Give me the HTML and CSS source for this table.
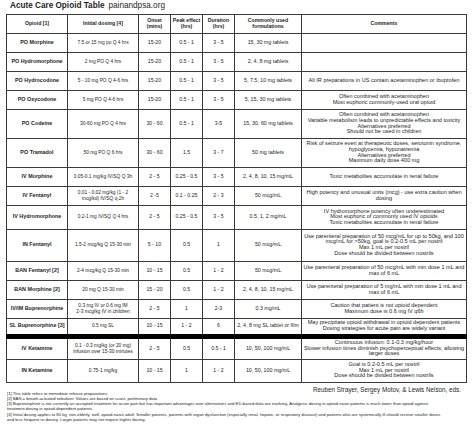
FILE: index.html
```html
<!DOCTYPE html>
<html>
<head>
<meta charset="utf-8">
<link rel="stylesheet" href="styles.css">
</head>
<body>
<div class="page">
  <div class="title"><span class="t-main">Acute Care Opioid Table</span><span class="t-site">painandpsa.org</span></div>
  <table class="opioids">
    <colgroup>
      <col class="c1"><col class="c2"><col class="c3"><col class="c4"><col class="c5"><col class="c6"><col class="c7">
    </colgroup>
    <tr class="h19 head">
      <td>Opioid [1]</td><td>Initial dosing [4]</td><td>Onset<br>(mins)</td><td>Peak effect<br>(hrs)</td><td>Duration<br>(hrs)</td><td>Commonly used<br>formulations</td><td>Comments</td>
    </tr>
    <tr class="h19">
      <td>PO Morphine</td><td>7.5 or 15 mg po Q 4 hrs</td><td>15-20</td><td>0.5 - 1</td><td>3 - 5</td><td>15, 30 mg tablets</td><td></td>
    </tr>
    <tr class="h19">
      <td>PO Hydromorphone</td><td>2 mg PO Q 4 hrs</td><td>15-20</td><td>0.5 - 1</td><td>3 - 5</td><td>2, 4, 8 mg tablets</td><td></td>
    </tr>
    <tr class="h19">
      <td>PO Hydrocodone</td><td>5 - 10 mg PO Q 4-6 hrs</td><td>15-20</td><td>0.5 - 1</td><td>3 - 5</td><td>5, 7.5, 10 mg tablets</td><td>All IR preparations in US contain acetaminophen or ibuprofen</td>
    </tr>
    <tr class="h19">
      <td>PO Oxycodone</td><td>5 mg PO Q 4-6 hrs</td><td>15-20</td><td>0.5 - 1</td><td>3 - 5</td><td>5, 15, 30 mg tablets</td><td>Often combined with acetaminophen<br>Most euphoric commonly-used oral opioid</td>
    </tr>
    <tr class="h29">
      <td>PO Codeine</td><td>30-60 mg PO Q 4 hrs</td><td>30 - 60</td><td>0.5 - 1</td><td>3-5</td><td>15, 30, 60 mg tablets</td><td>Often combined with acetaminophen<br>Variable metabolism leads to unpredictable effects and toxicity<br>Alternatives preferred<br>Should not be used in children</td>
    </tr>
    <tr class="h29">
      <td>PO Tramadol</td><td>50 mg PO Q 6 hrs</td><td>30 - 60</td><td>1.5</td><td>3 - 7</td><td>50 mg tablets</td><td>Risk of seizure even at therapeutic doses, serotonin syndrome,<br>hypoglycemia, hyponatremia<br>Alternatives preferred<br>Maximum daily dose 400 mg</td>
    </tr>
    <tr class="h19">
      <td>IV Morphine</td><td>0.05-0.1 mg/kg IV/SQ Q 3h</td><td>2 - 5</td><td>0.25 - 0.5</td><td>3 - 5</td><td>2, 4, 8, 10, 15 mg/mL</td><td>Toxic metabolites accumulate in renal failure</td>
    </tr>
    <tr class="h19">
      <td>IV Fentanyl</td><td>0.01 - 0.02 mg/kg (1 - 2<br>mcg/kd) IV/SQ q 2h</td><td>2 -5</td><td>0.1 - 0.25</td><td>2 - 3</td><td>50 mcg/mL</td><td>High potency and unusual units (mcg) - use extra caution when<br>dosing</td>
    </tr>
    <tr class="h24">
      <td>IV Hydromorphone</td><td>0.2-1 mg IV/SQ Q 4 hrs</td><td>2 - 5</td><td>0.25 - 0.5</td><td>3 - 5</td><td>0.5, 1, 2 mg/mL</td><td>IV hydromorphone potency often underestimated<br>Most euphoric of commonly used IV opioids<br>Toxic metabolites accumulate in renal failure</td>
    </tr>
    <tr class="h32">
      <td>IN Fentanyl</td><td>1.5-2 mcg/kg Q 15-30 min</td><td>5 - 10</td><td>0.5</td><td>1</td><td>50 mcg/mL</td><td>Use parenteral preparation of 50 mcg/mL for up to 50kg, and 100<br>mcg/mL for &gt;50kg, goal is 0.2-0.5 mL per nostril<br>Max 1 mL per nostril<br>Dose should be divided between nostrils</td>
    </tr>
    <tr class="h19">
      <td>BAN Fentanyl [2]</td><td>2-4 mcg/kg Q 15-30 min</td><td>10 - 15</td><td>0.5</td><td>1 - 2</td><td>50 mcg/mL</td><td>Use parenteral preparation of 50 mcg/mL with min dose 1 mL and<br>max of 6 mL</td>
    </tr>
    <tr class="h19">
      <td>BAN Morphine [2]</td><td>20 mg Q 15-30 min</td><td>15 - 20</td><td>0.5</td><td>1 - 2</td><td>2, 4, 8, 10, 15 mg/mL</td><td>Use parenteral preparation of 5 mg/mL with min dose 1 mL and<br>max of 6 mL</td>
    </tr>
    <tr class="h19">
      <td>IV/IM Buprenorphine</td><td>0.3 mg IV or 0.6 mg IM<br>2-3 mcg/kg IV in children</td><td>2 - 5</td><td>1</td><td>2-3</td><td>0.3 mg/mL</td><td>Caution that patient is not opioid dependent<br>Maximum dose is 0.6 mg IV q6h</td>
    </tr>
    <tr class="h18">
      <td>SL Buprenorphine [3]</td><td>0.5 mg SL</td><td>10 - 15</td><td>1 - 2</td><td>6</td><td>2, 4, 8 mg SL tablet or film</td><td>May precipitate opioid withdrawal in opioid dependent patients<br>Dosing strategies for acute pain are widely variant</td>
    </tr>
    <tr class="h23 sep">
      <td>IV Ketamine</td><td>0.1 - 0.3 mg/kg (or 20 mg)<br>infusion over 15-30 minutes</td><td>2 - 5</td><td>0.5</td><td>0.5 - 1</td><td>10, 50, 100 mg/mL</td><td>Continuous infusion: 0.1-0.3 mg/kg/hour<br>Slower infusion times diminish psychoperceptual effects, allowing<br>larger doses</td>
    </tr>
    <tr class="h23">
      <td>IN Ketamine</td><td>0.75-1 mg/kg</td><td>10 - 15</td><td>1</td><td>1 - 2</td><td>10, 50, 100 mg/mL</td><td>Goal is 0.2-0.5 mL per nostril<br>Max 1 mL per nostril<br>Dose should be divided between nostrils</td>
    </tr>
  </table>
  <div class="authors">Reuben Strayer, Sergey Motov, &amp; Lewis Nelson, eds.</div>
  <div class="notes">
    <div>[1] This table refers to immediate release preparations</div>
    <div>[2] BAN = breath-actuated nebulizer. Values are based on scant, preliminary data</div>
    <div>[3] Buprenorphine is not currently an accepted treatment for acute pain but has important advantages over alternatives and ED-based data are evolving. Analgesic dosing in opioid-naive patients is much lower than opioid agonist<br>treatment dosing in opioid-dependent patients.</div>
    <div>[4] Initial dosing applies to 80 kg, non-elderly, well, opioid-naive adult. Smaller patients, patients with organ dysfunction (especially renal, hepatic, or respiratory disease) and patients who are systemically ill should receive smaller doses<br>and less frequent re-dosing. Larger patients may not require higher dosing.</div>
  </div>
</div>
</body>
</html>
```

FILE: styles.css
```css
html, body {
  margin: 0;
  padding: 0;
  background: #fff;
}
body {
  font-family: "Liberation Sans", Arial, sans-serif;
  color: #1e1e1e;
}
.page {
  width: 474px;
  height: 430px;
  overflow: hidden;
}
.title {
  height: 13.5px;
  padding: 0.5px 0 0 10px;
  box-sizing: border-box;
  font-size: 8.2px;
  line-height: 10px;
  white-space: nowrap;
}
.t-main {
  font-weight: bold;
}
.t-site {
  margin-left: 4px;
}
.opioids {
  margin-left: 6px;
  width: 460px;
  table-layout: fixed;
  border-collapse: collapse;
  font-size: 4.8px;
  line-height: 5.4px;
}
.c1 { width: 61px; }
.c2 { width: 71px; }
.c3 { width: 32px; }
.c4 { width: 32px; }
.c5 { width: 32px; }
.c6 { width: 67px; }
.c7 { width: 165px; }
.opioids td {
  border: 1px solid #3a3a3a;
  padding: 0;
  text-align: center;
  vertical-align: middle;
  white-space: nowrap;
  overflow: hidden;
}
.opioids td:nth-child(1) {
  font-size: 5.4px;
  font-weight: bold;
}
.opioids td:nth-child(2) {
  font-size: 4.85px;
}
.opioids td:nth-child(3),
.opioids td:nth-child(4),
.opioids td:nth-child(5) {
  font-size: 5.2px;
}
.opioids td:nth-child(6) {
  font-size: 5.3px;
}
.opioids td:nth-child(7) {
  font-size: 5.55px;
  line-height: 5.6px;
}
.opioids tr.head td {
  font-size: 5.2px;
  font-weight: bold;
  line-height: 5.6px;
}
.h18 { height: 18px; }
.h19 { height: 19px; }
.h23 { height: 23px; }
.h24 { height: 24px; }
.h29 { height: 29px; }
.h32 { height: 32px; }
.opioids tr.sep td {
  border-top: 5px solid #000;
}
.authors {
  margin-top: 4.5px;
  margin-bottom: -2.3px;
  padding-right: 13px;
  text-align: right;
  font-size: 6.3px;
  line-height: 6px;
  white-space: nowrap;
}
.notes {
  padding-left: 7px;
  font-size: 4.2px;
  line-height: 5.2px;
  white-space: nowrap;
}
```
